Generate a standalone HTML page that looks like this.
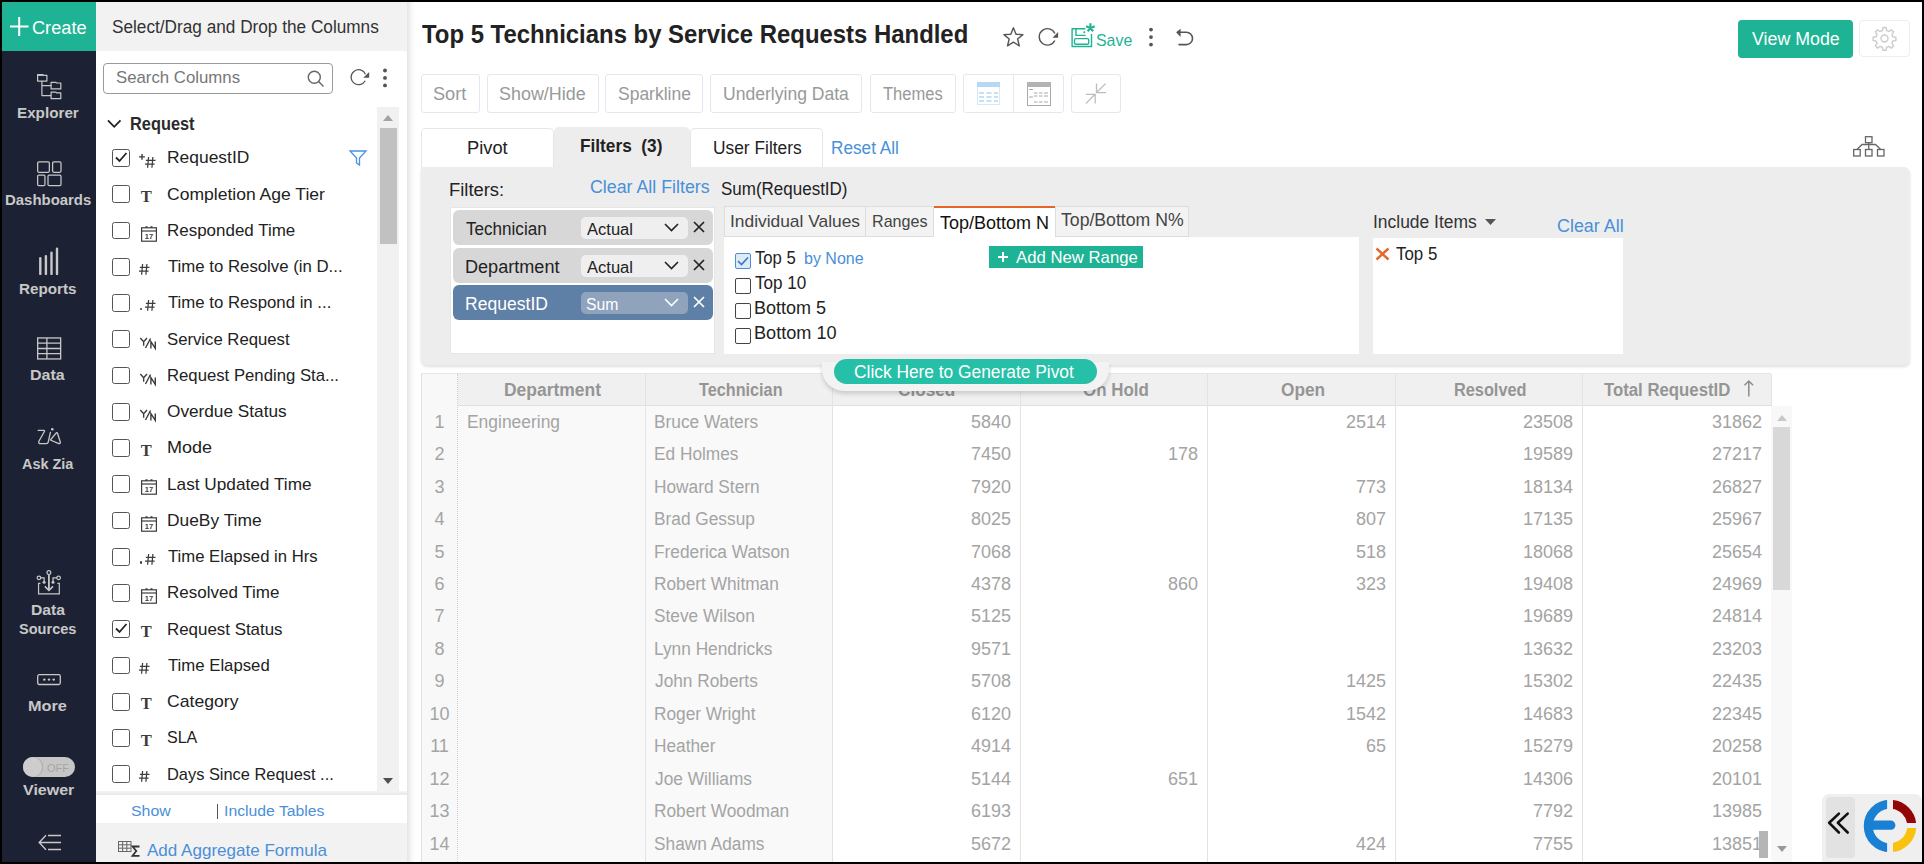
<!DOCTYPE html><html><head><meta charset="utf-8"><style>
*{margin:0;padding:0;box-sizing:border-box}
html,body{width:1924px;height:864px;overflow:hidden;background:#000}
body{position:relative;font-family:"Liberation Sans",sans-serif}
.t{position:absolute;white-space:nowrap;line-height:1}
.b{position:absolute}
svg{position:absolute;overflow:visible}
</style></head><body><div class="b" style="left:2px;top:2px;width:1920.00px;height:860.00px;background:#fff"></div>
<div class="b" style="left:2px;top:2px;width:94.00px;height:860.00px;background:#1c2233"></div>
<div class="b" style="left:2px;top:2px;width:94.00px;height:49.00px;background:#1db394"></div>
<svg style="left:10px;top:17px" width="19" height="19" viewBox="0 0 19 19" ><path d="M9.2 0V19M0 9.6H18.5" stroke="#fff" stroke-width="2"/></svg>
<div class="t" style="left:33.4px;top:18.70px;font-size:18px;color:#fff;font-weight:400;letter-spacing:0px;transform:scaleX(1.0096);transform-origin:0 0;margin-left:-1.01px;">Create</div>
<svg style="left:37px;top:74px" width="24" height="25" viewBox="0 0 24 25" ><g fill="none" stroke="#c8c8c8" stroke-width="1.2" stroke-linejoin="round">
<path d="M0.6 7.1V0.6H5.8L6.6 1.3H9.9V7.1Z"/><path d="M0.6 1.3H6.6"/>
<path d="M4.9 7.1V21.6H14.1M4.9 11.6H14.1"/>
<path d="M14.1 14.9V8.3H18.8L19.6 9H23.8V14.9Z"/><path d="M14.1 24.7V18.1H18.8L19.6 18.8H23.8V24.7Z"/></g></svg>
<div class="t" style="left:18.2px;top:105.25px;font-size:15px;color:#c8c8c8;font-weight:700;letter-spacing:0px;transform:scaleX(1.0150);transform-origin:0 0;margin-left:-1.01px;">Explorer</div>
<svg style="left:37px;top:161px" width="25" height="25" viewBox="0 0 25 25" ><g fill="none" stroke="#c8c8c8" stroke-width="1.25">
<rect x="0.65" y="0.9" width="11.7" height="10.4" rx="1.2"/><rect x="15.6" y="0.9" width="8.4" height="10.4" rx="1.2"/>
<rect x="0.65" y="14.2" width="7.3" height="10.4" rx="1.2"/><rect x="11" y="14.2" width="13" height="10.4" rx="1.2"/></g></svg>
<div class="t" style="left:6.2px;top:192.25px;font-size:15px;color:#c8c8c8;font-weight:700;letter-spacing:0px;transform:scaleX(0.9953);transform-origin:0 0;margin-left:-1.00px;">Dashboards</div>
<svg style="left:39px;top:248px" width="20" height="27" viewBox="0 0 20 27" ><path d="M1.3 10.1V25.9M6.9 8.3V25.9M12.5 4.6V25.9M18 0.8V25.9" fill="none" stroke="#c8c8c8" stroke-width="2.4" stroke-linecap="round"/></svg>
<div class="t" style="left:20.3px;top:280.85px;font-size:15px;color:#c8c8c8;font-weight:700;letter-spacing:0px;transform:scaleX(1.0145);transform-origin:0 0;margin-left:-1.01px;">Reports</div>
<svg style="left:37px;top:337px" width="24" height="23" viewBox="0 0 24 23" ><g fill="none" stroke="#c8c8c8" stroke-width="1.3"><rect x="0.65" y="0.95" width="23" height="21"/><path d="M0.65 6.2H23.6M0.65 11.5H23.6M0.65 16.7H23.6M9.9 0.95V21.9"/></g></svg>
<div class="t" style="left:31.3px;top:367.05px;font-size:15px;color:#c8c8c8;font-weight:700;letter-spacing:0px;transform:scaleX(1.0656);transform-origin:0 0;margin-left:-1.07px;">Data</div>
<svg style="left:37px;top:428px" width="24" height="17" viewBox="0 0 24 17" ><g fill="none" stroke="#c8c8c8" stroke-width="1.3" stroke-linejoin="round" stroke-linecap="round">
<path d="M1.2 2.4H6.8Q8 2.4 7.4 3.5L1.9 13.2Q1.2 15.7 3.5 15.7H9.5Q10.6 15.7 11.1 14.6L13.4 4.3"/>
<path d="M13.4 12L19.3 4.8Q20 4.2 20.4 5L23.3 14Q23.6 15.8 21.8 15.6Z"/></g>
<circle cx="15.3" cy="1.3" r="1.3" fill="#c8c8c8"/></svg>
<div class="t" style="left:22.1px;top:455.85px;font-size:15px;color:#c8c8c8;font-weight:700;letter-spacing:0px;transform:scaleX(0.9630);transform-origin:0 0;margin-left:0.00px;">Ask Zia</div>
<svg style="left:37px;top:570px" width="24" height="25" viewBox="0 0 24 25" ><g fill="none" stroke="#c8c8c8" stroke-width="1.2">
<path d="M3.4 13.4H1.56V23.8H22.3V13.4H20.4"/><path d="M11.9 4.7V19.7" stroke-width="1.8"/><path d="M7.85 16.4L11.9 20.4L16 16.4" stroke-width="1.5"/>
<path d="M3.8 7.85H7.1V11.5M20 7.85H16V11.5"/>
<circle cx="11.9" cy="2.6" r="1.9"/><circle cx="1.93" cy="7.85" r="1.8"/><circle cx="21.6" cy="7.85" r="1.8"/></g>
<circle cx="7.1" cy="12.3" r="1.5" fill="#c8c8c8"/><circle cx="16" cy="12.3" r="1.5" fill="#c8c8c8"/></svg>
<div class="t" style="left:31.799999999999997px;top:601.75px;font-size:15px;color:#c8c8c8;font-weight:700;letter-spacing:0px;transform:scaleX(1.0469);transform-origin:0 0;margin-left:-1.05px;">Data</div>
<div class="t" style="left:19.9px;top:621.05px;font-size:15px;color:#c8c8c8;font-weight:700;letter-spacing:0px;transform:scaleX(0.9707);transform-origin:0 0;margin-left:-0.97px;">Sources</div>
<svg style="left:37px;top:674px" width="24" height="11" viewBox="0 0 24 11" ><rect x="0.7" y="0.7" width="22.6" height="9.8" rx="1.5" fill="none" stroke="#c8c8c8" stroke-width="1.3"/>
<circle cx="7.3" cy="5.6" r="1.2" fill="#c8c8c8"/><circle cx="12" cy="5.6" r="1.2" fill="#c8c8c8"/><circle cx="16.7" cy="5.6" r="1.2" fill="#c8c8c8"/></svg>
<div class="t" style="left:29.4px;top:698.45px;font-size:15px;color:#c8c8c8;font-weight:700;letter-spacing:0px;transform:scaleX(1.0857);transform-origin:0 0;margin-left:-1.09px;">More</div>
<div class="b" style="left:23px;top:757px;width:52.00px;height:20.00px;background:#c6c6c6;border-radius:10px"></div>
<div class="b" style="left:23px;top:757px;width:19.00px;height:20.00px;background:#cdcdcd;border-radius:50%;box-shadow:1px 0 1px rgba(0,0,0,0.15)"></div>
<div class="t" style="left:47px;top:762.78px;font-size:10.5px;color:#a6a6a6;font-weight:400;letter-spacing:0px;transform:scaleX(1.0476);transform-origin:0 0;margin-left:0.00px;">OFF</div>
<div class="t" style="left:22.8px;top:781.85px;font-size:15px;color:#c8c8c8;font-weight:700;letter-spacing:0px;transform:scaleX(1.0667);transform-origin:0 0;margin-left:0.00px;">Viewer</div>
<svg style="left:38px;top:834px" width="24" height="17" viewBox="0 0 24 17" ><path d="M8 1.2L1.2 8.5L8 15.8M1.2 8.5H23M10 1.5H23M10 15.5H23" fill="none" stroke="#c8c8c8" stroke-width="1.4"/></svg>
<div class="b" style="left:96px;top:2px;width:311.00px;height:860.00px;background:#fff"></div>
<div class="b" style="left:96px;top:2px;width:311.00px;height:49.00px;background:#f2f2f2"></div>
<div class="t" style="left:113px;top:18.62px;font-size:17.5px;color:#333;font-weight:400;letter-spacing:0px;transform:scaleX(0.9830);transform-origin:0 0;margin-left:-0.98px;">Select/Drag and Drop the Columns</div>
<div class="b" style="left:407px;top:2px;width:9.00px;height:860.00px;background:linear-gradient(90deg,#e4e4e4,#f7f7f7 50%,#fff)"></div>
<div class="b" style="left:103px;top:63px;width:230.00px;height:31.00px;border:1px solid #9a9a9a;border-radius:4px;background:#fff"></div>
<div class="t" style="left:116.9px;top:68.75px;font-size:17px;color:#777;font-weight:400;letter-spacing:0px;transform:scaleX(0.9871);transform-origin:0 0;margin-left:-0.99px;">Search Columns</div>
<svg style="left:307px;top:70px" width="18" height="18" viewBox="0 0 18 18" ><g fill="none" stroke="#666" stroke-width="1.4"><circle cx="7.3" cy="7.3" r="6"/><path d="M11.6 11.6L16.5 16.5"/></g></svg>
<svg style="left:340px;top:60px" width="30" height="30" viewBox="0 0 30 30" ><path d="M25.5 14.27A7.5 7.5 0 1 0 25.22 20.72" fill="none" stroke="#555" stroke-width="1.25"/><path d="M29.2 12V17.8H23.3Z" fill="#555"/></svg>
<svg style="left:380px;top:65px" width="10" height="25" viewBox="0 0 10 25" ><circle cx="5" cy="5.45" r="1.95" fill="#555"/><circle cx="5" cy="12.9" r="1.95" fill="#555"/><circle cx="5" cy="20.4" r="1.95" fill="#555"/></svg>
<svg style="left:107px;top:119px" width="15" height="10" viewBox="0 0 15 10" ><path d="M1 1.3L7.2 7.8L13.5 1.3" fill="none" stroke="#222" stroke-width="1.8"/></svg>
<div class="t" style="left:130.8px;top:114.60px;font-size:18px;color:#2a2a2a;font-weight:700;letter-spacing:0px;transform:scaleX(0.9086);transform-origin:0 0;margin-left:-0.91px;">Request</div>
<div class="b" style="left:377px;top:107px;width:22.00px;height:684.00px;background:#f1f1f1"></div>
<svg style="left:383px;top:115px" width="10" height="6" viewBox="0 0 10 6" ><path d="M0 6L5 0L10 6Z" fill="#a3a3a3"/></svg>
<div class="b" style="left:380px;top:128px;width:17.00px;height:116.00px;background:#c1c1c1"></div>
<svg style="left:383px;top:778px" width="10" height="6" viewBox="0 0 10 6" ><path d="M0 0L5 6L10 0Z" fill="#505050"/></svg>
<div class="b" style="left:112.2px;top:149.15px;width:17.70px;height:17.70px;border:1.2px solid #555;border-radius:2.5px;background:#fff"></div>
<svg style="left:114px;top:149.5px" width="14" height="14" viewBox="0 0 14 14" ><path d="M2 7.5L5.5 11L12.5 3" fill="none" stroke="#222" stroke-width="1.8"/></svg>
<svg style="left:138.9px;top:154.20000000000002px" width="6" height="6" viewBox="0 0 6 6" ><path d="M3 0V5.7M0 2.85H5.9" stroke="#3d3d3d" stroke-width="1.4"/></svg>
<svg style="left:144.9px;top:157.20000000000002px" width="11" height="11" viewBox="0 0 11 11" ><path d="M3.6 0L2.6 10.7M7.9 0L6.9 10.7M0.9 3.3H10.5M0 7.2H9.6" fill="none" stroke="#3d3d3d" stroke-width="1.25"/></svg>
<div class="t" style="left:168.25px;top:149.45px;font-size:17px;color:#222;font-weight:400;letter-spacing:0px;transform:scaleX(1.0247);transform-origin:0 0;margin-left:-1.02px;">RequestID</div>
<div class="b" style="left:112.2px;top:185.4px;width:17.70px;height:17.70px;border:1.2px solid #555;border-radius:2.5px;background:#fff"></div>
<div class="t" style="left:140.8px;top:188.77px;font-size:16.5px;color:#3d3d3d;font-weight:700;letter-spacing:0px;font-family:'Liberation Serif';margin-left:0.00px;">T</div>
<div class="t" style="left:168.25px;top:185.70px;font-size:17px;color:#222;font-weight:400;letter-spacing:0px;transform:scaleX(1.0312);transform-origin:0 0;margin-left:-1.03px;">Completion Age Tier</div>
<div class="b" style="left:112.2px;top:221.65px;width:17.70px;height:17.70px;border:1.2px solid #555;border-radius:2.5px;background:#fff"></div>
<svg style="left:141px;top:225.70000000000002px" width="16" height="16" viewBox="0 0 16 16" ><g fill="none" stroke="#3d3d3d" stroke-width="1.2"><rect x="0.6" y="1.8" width="14.8" height="13.4"/><path d="M0.6 5H15.4"/></g>
<path d="M4.5 0.2H6.5V2H4.5ZM9.5 0.2H11.5V2H9.5Z" fill="#3d3d3d"/>
<text x="8" y="13.3" font-size="7.5" text-anchor="middle" fill="#3d3d3d" font-family="Liberation Sans" font-weight="700">17</text></svg>
<div class="t" style="left:168.25px;top:221.95px;font-size:17px;color:#222;font-weight:400;letter-spacing:0px;transform:scaleX(0.9980);transform-origin:0 0;margin-left:-1.00px;">Responded Time</div>
<div class="b" style="left:112.2px;top:257.9px;width:17.70px;height:17.70px;border:1.2px solid #555;border-radius:2.5px;background:#fff"></div>
<svg style="left:139.3px;top:263.95px" width="11" height="11" viewBox="0 0 11 11" ><path d="M3.6 0L2.6 10.7M7.9 0L6.9 10.7M0.9 3.3H10.5M0 7.2H9.6" fill="none" stroke="#3d3d3d" stroke-width="1.25"/></svg>
<div class="t" style="left:168.25px;top:258.20px;font-size:17px;color:#222;font-weight:400;letter-spacing:0px;transform:scaleX(0.9866);transform-origin:0 0;margin-left:0.00px;">Time to Resolve (in D...</div>
<div class="b" style="left:112.2px;top:294.15px;width:17.70px;height:17.70px;border:1.2px solid #555;border-radius:2.5px;background:#fff"></div>
<div class="b" style="left:139.6px;top:307.7px;width:2.40px;height:2.40px;background:#3d3d3d;border-radius:50%"></div>
<svg style="left:144.8px;top:300.0px" width="11" height="11" viewBox="0 0 11 11" ><path d="M3.6 0L2.6 10.7M7.9 0L6.9 10.7M0.9 3.3H10.5M0 7.2H9.6" fill="none" stroke="#3d3d3d" stroke-width="1.25"/></svg>
<div class="t" style="left:168.25px;top:294.45px;font-size:17px;color:#222;font-weight:400;letter-spacing:0px;transform:scaleX(0.9857);transform-origin:0 0;margin-left:0.00px;">Time to Respond in ...</div>
<div class="b" style="left:112.2px;top:330.4px;width:17.70px;height:17.70px;border:1.2px solid #555;border-radius:2.5px;background:#fff"></div>
<svg style="left:139.9px;top:337.84999999999997px" width="16" height="11" viewBox="0 0 16 11" ><g fill="none" stroke="#3d3d3d" stroke-width="1.4"><path d="M0.3 0L3.65 3.8L7 0M3.65 3.8V7.7M10.5 0.5L5.5 10"/><path d="M10.9 10.4V3.6L15.3 10.4V3.6"/></g></svg>
<div class="t" style="left:168.25px;top:330.70px;font-size:17px;color:#222;font-weight:400;letter-spacing:0px;transform:scaleX(0.9827);transform-origin:0 0;margin-left:-0.98px;">Service Request</div>
<div class="b" style="left:112.2px;top:366.65px;width:17.70px;height:17.70px;border:1.2px solid #555;border-radius:2.5px;background:#fff"></div>
<svg style="left:139.9px;top:374.09999999999997px" width="16" height="11" viewBox="0 0 16 11" ><g fill="none" stroke="#3d3d3d" stroke-width="1.4"><path d="M0.3 0L3.65 3.8L7 0M3.65 3.8V7.7M10.5 0.5L5.5 10"/><path d="M10.9 10.4V3.6L15.3 10.4V3.6"/></g></svg>
<div class="t" style="left:168.25px;top:366.95px;font-size:17px;color:#222;font-weight:400;letter-spacing:0px;transform:scaleX(0.9834);transform-origin:0 0;margin-left:-0.98px;">Request Pending Sta...</div>
<div class="b" style="left:112.2px;top:402.9px;width:17.70px;height:17.70px;border:1.2px solid #555;border-radius:2.5px;background:#fff"></div>
<svg style="left:139.9px;top:410.34999999999997px" width="16" height="11" viewBox="0 0 16 11" ><g fill="none" stroke="#3d3d3d" stroke-width="1.4"><path d="M0.3 0L3.65 3.8L7 0M3.65 3.8V7.7M10.5 0.5L5.5 10"/><path d="M10.9 10.4V3.6L15.3 10.4V3.6"/></g></svg>
<div class="t" style="left:168.25px;top:403.20px;font-size:17px;color:#222;font-weight:400;letter-spacing:0px;transform:scaleX(1.0124);transform-origin:0 0;margin-left:-1.01px;">Overdue Status</div>
<div class="b" style="left:112.2px;top:439.15px;width:17.70px;height:17.70px;border:1.2px solid #555;border-radius:2.5px;background:#fff"></div>
<div class="t" style="left:140.8px;top:442.51px;font-size:16.5px;color:#3d3d3d;font-weight:700;letter-spacing:0px;font-family:'Liberation Serif';margin-left:0.00px;">T</div>
<div class="t" style="left:168.25px;top:439.45px;font-size:17px;color:#222;font-weight:400;letter-spacing:0px;transform:scaleX(1.0598);transform-origin:0 0;margin-left:-1.06px;">Mode</div>
<div class="b" style="left:112.2px;top:475.4px;width:17.70px;height:17.70px;border:1.2px solid #555;border-radius:2.5px;background:#fff"></div>
<svg style="left:141px;top:479.45px" width="16" height="16" viewBox="0 0 16 16" ><g fill="none" stroke="#3d3d3d" stroke-width="1.2"><rect x="0.6" y="1.8" width="14.8" height="13.4"/><path d="M0.6 5H15.4"/></g>
<path d="M4.5 0.2H6.5V2H4.5ZM9.5 0.2H11.5V2H9.5Z" fill="#3d3d3d"/>
<text x="8" y="13.3" font-size="7.5" text-anchor="middle" fill="#3d3d3d" font-family="Liberation Sans" font-weight="700">17</text></svg>
<div class="t" style="left:168.25px;top:475.70px;font-size:17px;color:#222;font-weight:400;letter-spacing:0px;transform:scaleX(1.0131);transform-origin:0 0;margin-left:-1.01px;">Last Updated Time</div>
<div class="b" style="left:112.2px;top:511.65px;width:17.70px;height:17.70px;border:1.2px solid #555;border-radius:2.5px;background:#fff"></div>
<svg style="left:141px;top:515.6999999999999px" width="16" height="16" viewBox="0 0 16 16" ><g fill="none" stroke="#3d3d3d" stroke-width="1.2"><rect x="0.6" y="1.8" width="14.8" height="13.4"/><path d="M0.6 5H15.4"/></g>
<path d="M4.5 0.2H6.5V2H4.5ZM9.5 0.2H11.5V2H9.5Z" fill="#3d3d3d"/>
<text x="8" y="13.3" font-size="7.5" text-anchor="middle" fill="#3d3d3d" font-family="Liberation Sans" font-weight="700">17</text></svg>
<div class="t" style="left:168.25px;top:511.95px;font-size:17px;color:#222;font-weight:400;letter-spacing:0px;transform:scaleX(1.0214);transform-origin:0 0;margin-left:-1.02px;">DueBy Time</div>
<div class="b" style="left:112.2px;top:547.9px;width:17.70px;height:17.70px;border:1.2px solid #555;border-radius:2.5px;background:#fff"></div>
<div class="b" style="left:139.6px;top:561.4499999999999px;width:2.40px;height:2.40px;background:#3d3d3d;border-radius:50%"></div>
<svg style="left:144.8px;top:553.75px" width="11" height="11" viewBox="0 0 11 11" ><path d="M3.6 0L2.6 10.7M7.9 0L6.9 10.7M0.9 3.3H10.5M0 7.2H9.6" fill="none" stroke="#3d3d3d" stroke-width="1.25"/></svg>
<div class="t" style="left:168.25px;top:548.20px;font-size:17px;color:#222;font-weight:400;letter-spacing:0px;transform:scaleX(0.9819);transform-origin:0 0;margin-left:0.00px;">Time Elapsed in Hrs</div>
<div class="b" style="left:112.2px;top:584.15px;width:17.70px;height:17.70px;border:1.2px solid #555;border-radius:2.5px;background:#fff"></div>
<svg style="left:141px;top:588.1999999999999px" width="16" height="16" viewBox="0 0 16 16" ><g fill="none" stroke="#3d3d3d" stroke-width="1.2"><rect x="0.6" y="1.8" width="14.8" height="13.4"/><path d="M0.6 5H15.4"/></g>
<path d="M4.5 0.2H6.5V2H4.5ZM9.5 0.2H11.5V2H9.5Z" fill="#3d3d3d"/>
<text x="8" y="13.3" font-size="7.5" text-anchor="middle" fill="#3d3d3d" font-family="Liberation Sans" font-weight="700">17</text></svg>
<div class="t" style="left:168.25px;top:584.45px;font-size:17px;color:#222;font-weight:400;letter-spacing:0px;transform:scaleX(0.9995);transform-origin:0 0;margin-left:-1.00px;">Resolved Time</div>
<div class="b" style="left:112.2px;top:620.4px;width:17.70px;height:17.70px;border:1.2px solid #555;border-radius:2.5px;background:#fff"></div>
<svg style="left:114px;top:620.75px" width="14" height="14" viewBox="0 0 14 14" ><path d="M2 7.5L5.5 11L12.5 3" fill="none" stroke="#222" stroke-width="1.8"/></svg>
<div class="t" style="left:140.8px;top:623.76px;font-size:16.5px;color:#3d3d3d;font-weight:700;letter-spacing:0px;font-family:'Liberation Serif';margin-left:0.00px;">T</div>
<div class="t" style="left:168.25px;top:620.70px;font-size:17px;color:#222;font-weight:400;letter-spacing:0px;transform:scaleX(0.9943);transform-origin:0 0;margin-left:-0.99px;">Request Status</div>
<div class="b" style="left:112.2px;top:656.65px;width:17.70px;height:17.70px;border:1.2px solid #555;border-radius:2.5px;background:#fff"></div>
<svg style="left:139.3px;top:662.6999999999999px" width="11" height="11" viewBox="0 0 11 11" ><path d="M3.6 0L2.6 10.7M7.9 0L6.9 10.7M0.9 3.3H10.5M0 7.2H9.6" fill="none" stroke="#3d3d3d" stroke-width="1.25"/></svg>
<div class="t" style="left:168.25px;top:656.95px;font-size:17px;color:#222;font-weight:400;letter-spacing:0px;transform:scaleX(0.9848);transform-origin:0 0;margin-left:0.00px;">Time Elapsed</div>
<div class="b" style="left:112.2px;top:692.9px;width:17.70px;height:17.70px;border:1.2px solid #555;border-radius:2.5px;background:#fff"></div>
<div class="t" style="left:140.8px;top:696.26px;font-size:16.5px;color:#3d3d3d;font-weight:700;letter-spacing:0px;font-family:'Liberation Serif';margin-left:0.00px;">T</div>
<div class="t" style="left:168.25px;top:693.20px;font-size:17px;color:#222;font-weight:400;letter-spacing:0px;transform:scaleX(1.0360);transform-origin:0 0;margin-left:-1.04px;">Category</div>
<div class="b" style="left:112.2px;top:729.15px;width:17.70px;height:17.70px;border:1.2px solid #555;border-radius:2.5px;background:#fff"></div>
<div class="t" style="left:140.8px;top:732.51px;font-size:16.5px;color:#3d3d3d;font-weight:700;letter-spacing:0px;font-family:'Liberation Serif';margin-left:0.00px;">T</div>
<div class="t" style="left:168.25px;top:729.45px;font-size:17px;color:#222;font-weight:400;letter-spacing:0px;transform:scaleX(0.9435);transform-origin:0 0;margin-left:-0.94px;">SLA</div>
<div class="b" style="left:112.2px;top:765.4px;width:17.70px;height:17.70px;border:1.2px solid #555;border-radius:2.5px;background:#fff"></div>
<svg style="left:139.3px;top:771.4499999999999px" width="11" height="11" viewBox="0 0 11 11" ><path d="M3.6 0L2.6 10.7M7.9 0L6.9 10.7M0.9 3.3H10.5M0 7.2H9.6" fill="none" stroke="#3d3d3d" stroke-width="1.25"/></svg>
<div class="t" style="left:168.25px;top:765.70px;font-size:17px;color:#222;font-weight:400;letter-spacing:0px;transform:scaleX(0.9646);transform-origin:0 0;margin-left:-0.96px;">Days Since Request ...</div>
<svg style="left:349px;top:150px" width="18" height="16" viewBox="0 0 18 16" ><path d="M1 1H17L10.5 8V15L7.5 13V8Z" fill="none" stroke="#4a90e2" stroke-width="1.3"/></svg>
<div class="b" style="left:96px;top:791px;width:311.00px;height:4.00px;background:linear-gradient(#f4f4f4,#e9e9e9)"></div>
<div class="t" style="left:132px;top:803.33px;font-size:15.5px;color:#4a8fd8;font-weight:400;letter-spacing:0px;transform:scaleX(1.0263);transform-origin:0 0;margin-left:-1.03px;">Show</div>
<div class="b" style="left:216.5px;top:804px;width:1.50px;height:15.00px;background:#555"></div>
<div class="t" style="left:225.4px;top:803.33px;font-size:15.5px;color:#4a8fd8;font-weight:400;letter-spacing:0px;transform:scaleX(1.0165);transform-origin:0 0;margin-left:-1.02px;">Include Tables</div>
<div class="b" style="left:96px;top:823px;width:311.00px;height:39.00px;background:#f2f2f2"></div>
<svg style="left:118px;top:841px" width="24" height="17" viewBox="0 0 24 17" ><g fill="none" stroke="#666" stroke-width="1"><rect x="0.5" y="0.5" width="12.5" height="10"/><path d="M0.5 3.8H13M0.5 7.2H13M4.6 0.5V10.5M8.8 0.5V10.5"/></g>
<path d="M21.5 5.5H14.5L18.3 10L14.5 14.8H21.5" fill="none" stroke="#333" stroke-width="1.8"/></svg>
<div class="t" style="left:147.4px;top:841.55px;font-size:17px;color:#4a8fd8;font-weight:400;letter-spacing:0px;transform:scaleX(1.0022);transform-origin:0 0;margin-left:0.00px;">Add Aggregate Formula</div>
<div class="t" style="left:422.3px;top:22.04px;font-size:25.6px;color:#222;font-weight:700;letter-spacing:0px;transform:scaleX(0.9337);transform-origin:0 0;margin-left:0.00px;">Top 5 Technicians by Service Requests Handled</div>
<svg style="left:1003px;top:27px" width="21" height="20" viewBox="0 0 21 20" ><path d="M10.4 0.8L13 7.2L19.9 7.6L14.6 12L16.3 18.8L10.4 15.1L4.5 18.8L6.2 12L0.9 7.6L7.8 7.2Z" fill="none" stroke="#555" stroke-width="1.4" stroke-linejoin="round"/></svg>
<svg style="left:1034px;top:24px" width="30" height="26" viewBox="0 0 30 26" ><path d="M20.6 33.6" /><path d="M20.9 9.5A8.2 8.2 0 1 0 20.8 16.5" fill="none" stroke="#555" stroke-width="1.4"/><path d="M24.1 8.1V13.7H18.5Z" fill="#555"/></svg>
<svg style="left:1068px;top:18px" width="30" height="32" viewBox="0 0 30 32" ><g fill="none" stroke="#1db394" stroke-width="1.4" stroke-linejoin="round">
<path d="M17.4 10.7H4.1V28.5H23.5V15.9"/><path d="M8 10.7V17.4H17.6"/><rect x="6.5" y="20.6" width="14.2" height="5.7" rx="1.3"/></g>
<circle cx="16.3" cy="14.3" r="1" fill="#1db394"/>
<path d="M22.4 5.2V10.4M18.1 8.3L22.4 10.2L26.7 8.3M19.6 13.3L22.4 10.2L25.2 13.3" fill="none" stroke="#1db394" stroke-width="2.1"/></svg>
<div class="t" style="left:1097.2px;top:32.45px;font-size:17px;color:#1db394;font-weight:400;letter-spacing:0px;transform:scaleX(0.9351);transform-origin:0 0;margin-left:-0.94px;">Save</div>
<svg style="left:1146px;top:25px" width="10" height="25" viewBox="0 0 10 25" ><circle cx="5" cy="4.6" r="1.9" fill="#555"/><circle cx="5" cy="12.1" r="1.9" fill="#555"/><circle cx="5" cy="19.6" r="1.9" fill="#555"/></svg>
<svg style="left:1170px;top:22px" width="30" height="30" viewBox="0 0 30 30" ><path d="M10.4 10.2H16.3A6.2 6.2 0 0 1 16.3 22.6H9" fill="none" stroke="#555" stroke-width="1.6" stroke-linecap="round"/><path d="M6.1 10.2L10.6 6.8V14.9Z" fill="#555"/></svg>
<div class="b" style="left:1738px;top:20px;width:115.00px;height:38.00px;background:#1db394;border-radius:4px"></div>
<div class="t" style="left:1752px;top:29.90px;font-size:18px;color:#fff;font-weight:400;letter-spacing:0px;transform:scaleX(0.9886);transform-origin:0 0;margin-left:0.00px;">View Mode</div>
<div class="b" style="left:1859px;top:20px;width:51.00px;height:37.00px;border:1px solid #eee;border-radius:4px;background:#fff"></div>
<svg style="left:1872px;top:26px" width="25" height="25" viewBox="0 0 25 25" ><g fill="none" stroke="#ccc" stroke-width="1.4"><circle cx="12.5" cy="12.5" r="3.5"/><path d="M11 1.5h3l.6 3 2.3 1 2.6-1.7 2.1 2.1-1.7 2.6 1 2.3 3 .6v3l-3 .6-1 2.3 1.7 2.6-2.1 2.1-2.6-1.7-2.3 1-.6 3h-3l-.6-3-2.3-1-2.6 1.7-2.1-2.1 1.7-2.6-1-2.3-3-.6v-3l3-.6 1-2.3-1.7-2.6 2.1-2.1 2.6 1.7 2.3-1z"/></g></svg>
<div class="b" style="left:421px;top:74px;width:59.00px;height:39.00px;border:1px solid #e3e8f0;border-radius:3px;background:#fff"></div>
<div class="t" style="left:434.4px;top:86.33px;font-size:17.5px;color:#999;font-weight:400;letter-spacing:0px;transform:scaleX(1.0387);transform-origin:0 0;margin-left:-1.04px;">Sort</div>
<div class="b" style="left:487px;top:74px;width:112.00px;height:39.00px;border:1px solid #e3e8f0;border-radius:3px;background:#fff"></div>
<div class="t" style="left:500.3px;top:86.33px;font-size:17.5px;color:#999;font-weight:400;letter-spacing:0px;transform:scaleX(1.0241);transform-origin:0 0;margin-left:-1.02px;">Show/Hide</div>
<div class="b" style="left:605px;top:74px;width:98.00px;height:39.00px;border:1px solid #e3e8f0;border-radius:3px;background:#fff"></div>
<div class="t" style="left:619.3px;top:86.33px;font-size:17.5px;color:#999;font-weight:400;letter-spacing:0px;transform:scaleX(0.9986);transform-origin:0 0;margin-left:-1.00px;">Sparkline</div>
<div class="b" style="left:710px;top:74px;width:152.00px;height:39.00px;border:1px solid #e3e8f0;border-radius:3px;background:#fff"></div>
<div class="t" style="left:724px;top:86.33px;font-size:17.5px;color:#999;font-weight:400;letter-spacing:0px;transform:scaleX(1.0032);transform-origin:0 0;margin-left:-1.00px;">Underlying Data</div>
<div class="b" style="left:870px;top:74px;width:86.00px;height:39.00px;border:1px solid #e3e8f0;border-radius:3px;background:#fff"></div>
<div class="t" style="left:883.4px;top:86.33px;font-size:17.5px;color:#999;font-weight:400;letter-spacing:0px;transform:scaleX(0.9444);transform-origin:0 0;margin-left:0.00px;">Themes</div>
<div class="b" style="left:963px;top:74px;width:101.00px;height:39.00px;border:1px solid #e3e8f0;border-radius:3px;background:#fff"></div>
<div class="b" style="left:1013px;top:74px;width:1.00px;height:39.00px;background:#e3e8f0"></div>
<div class="b" style="left:1071px;top:74px;width:50.00px;height:39.00px;border:1px solid #e3e8f0;border-radius:3px;background:#fff"></div>
<svg style="left:977px;top:82px" width="24" height="24" viewBox="0 0 24 24" ><rect x="0.5" y="0.5" width="22" height="22" fill="none" stroke="#a9d2f3" stroke-dasharray="1 1"/><rect x="0" y="0" width="23" height="5" fill="#b6d8f2"/>
<path d="M2 11H7M9.5 11H14.5M17 11H21M2 15H7M9.5 15H14.5M17 15H21M2 19H7M9.5 19H14.5M17 19H21" stroke="#8cc4ee" stroke-width="1.2"/></svg>
<svg style="left:1027px;top:82px" width="24" height="24" viewBox="0 0 24 24" ><rect x="0.5" y="0.5" width="23" height="23" fill="none" stroke="#aaa"/><rect x="0" y="0" width="24" height="5" fill="#b3b3b3"/>
<path d="M2 7.5H6M2 15H6M7 11H10.5M12 11H15.5M17 11H21M7 14H10.5M12 14H15.5M17 14H21M7 20H10.5M12 20H15.5M17 20H21" stroke="#aaa" stroke-width="1.2"/></svg>
<svg style="left:1085px;top:83px" width="22" height="22" viewBox="0 0 22 22" ><path d="M20.6 0.6L11.8 9.3M11.5 0.6V9.6H20.9M0.9 20.6L9.8 11.5M0.9 11.3H10.2V20.6" fill="none" stroke="#bdbdbd" stroke-width="1.3"/></svg>
<div class="b" style="left:421px;top:128px;width:133.00px;height:40.00px;border:1px solid #e6e6e6;border-bottom:none;border-radius:5px 5px 0 0;background:#fff"></div>
<div class="b" style="left:554px;top:127px;width:136.00px;height:41.00px;background:#ededed;border-radius:5px 5px 0 0"></div>
<div class="b" style="left:690px;top:128px;width:133.00px;height:40.00px;border:1px solid #e6e6e6;border-bottom:none;border-radius:5px 5px 0 0;background:#fff"></div>
<div class="t" style="left:468.1px;top:140.12px;font-size:17.5px;color:#222;font-weight:400;letter-spacing:0px;transform:scaleX(1.0447);transform-origin:0 0;margin-left:-1.04px;">Pivot</div>
<div class="t" style="left:581px;top:137.62px;font-size:17.5px;color:#222;font-weight:700;letter-spacing:0px;transform:scaleX(0.9854);transform-origin:0 0;margin-left:-0.99px;">Filters&nbsp;&nbsp;(3)</div>
<div class="t" style="left:713.7px;top:140.12px;font-size:17.5px;color:#222;font-weight:400;letter-spacing:0px;transform:scaleX(0.9920);transform-origin:0 0;margin-left:-0.99px;">User Filters</div>
<div class="t" style="left:831.6px;top:140.12px;font-size:17.5px;color:#4a8fd8;font-weight:400;letter-spacing:0px;transform:scaleX(0.9836);transform-origin:0 0;margin-left:-0.98px;">Reset All</div>
<svg style="left:1853px;top:136px" width="32" height="21" viewBox="0 0 32 21" ><g fill="none" stroke="#666" stroke-width="1.3">
<rect x="12.5" y="0.7" width="6.5" height="6"/><rect x="0.7" y="13.5" width="6.5" height="6.5"/><rect x="12.5" y="13.5" width="6.5" height="6.5"/><rect x="24.5" y="13.5" width="6.5" height="6.5"/>
<path d="M15.75 6.7V13.5M4 13.5L9 8.5H22.5L27.7 13.5"/></g></svg>
<div class="b" style="left:421px;top:167px;width:1489.00px;height:198.00px;background:#ededed;border-radius:0 6px 6px 6px;box-shadow:0 2px 3px rgba(0,0,0,0.12)"></div>
<div class="t" style="left:450px;top:181.62px;font-size:17.5px;color:#222;font-weight:400;letter-spacing:0px;transform:scaleX(1.0500);transform-origin:0 0;margin-left:-1.05px;">Filters:</div>
<div class="t" style="left:591.25px;top:179.12px;font-size:17.5px;color:#4a8fd8;font-weight:400;letter-spacing:0px;transform:scaleX(1.0172);transform-origin:0 0;margin-left:-1.02px;">Clear All Filters</div>
<div class="t" style="left:722px;top:181.12px;font-size:17.5px;color:#222;font-weight:400;letter-spacing:0px;transform:scaleX(0.9707);transform-origin:0 0;margin-left:-0.97px;">Sum(RequestID)</div>
<div class="b" style="left:450px;top:207px;width:265.00px;height:147.00px;background:#fff;border:1px solid #e6e6e6"></div>
<div class="b" style="left:453px;top:210px;width:260.00px;height:35.00px;background:#d7d7d7;border-radius:6px"></div>
<div class="t" style="left:465.75px;top:220.62px;font-size:17.5px;color:#222;font-weight:400;letter-spacing:0px;transform:scaleX(0.9756);transform-origin:0 0;margin-left:0.00px;">Technician</div>
<div class="b" style="left:581px;top:217px;width:107.00px;height:22.00px;background:#efefef;border-radius:5px"></div>
<div class="t" style="left:587px;top:221.90px;font-size:16px;color:#222;font-weight:400;letter-spacing:0px;transform:scaleX(1.0341);transform-origin:0 0;margin-left:0.00px;">Actual</div>
<svg style="left:664px;top:223px" width="15" height="9" viewBox="0 0 15 9" ><path d="M1 1L7.5 7.5L14 1" fill="none" stroke="#222" stroke-width="1.6"/></svg>
<svg style="left:693px;top:221px" width="12" height="12" viewBox="0 0 12 12" ><path d="M1 1L11 11M11 1L1 11" fill="none" stroke="#222" stroke-width="1.7"/></svg>
<div class="b" style="left:453px;top:248px;width:260.00px;height:35.00px;background:#d7d7d7;border-radius:6px"></div>
<div class="t" style="left:465.75px;top:258.62px;font-size:17.5px;color:#222;font-weight:400;letter-spacing:0px;transform:scaleX(1.0333);transform-origin:0 0;margin-left:-1.03px;">Department</div>
<div class="b" style="left:581px;top:255px;width:107.00px;height:22.00px;background:#efefef;border-radius:5px"></div>
<div class="t" style="left:587px;top:259.90px;font-size:16px;color:#222;font-weight:400;letter-spacing:0px;transform:scaleX(1.0341);transform-origin:0 0;margin-left:0.00px;">Actual</div>
<svg style="left:664px;top:261px" width="15" height="9" viewBox="0 0 15 9" ><path d="M1 1L7.5 7.5L14 1" fill="none" stroke="#222" stroke-width="1.6"/></svg>
<svg style="left:693px;top:259px" width="12" height="12" viewBox="0 0 12 12" ><path d="M1 1L11 11M11 1L1 11" fill="none" stroke="#222" stroke-width="1.7"/></svg>
<div class="b" style="left:453px;top:285px;width:260.00px;height:35.00px;background:#5f80a6;border-radius:6px"></div>
<div class="t" style="left:465.75px;top:295.62px;font-size:17.5px;color:#fff;font-weight:400;letter-spacing:0px;transform:scaleX(1.0031);transform-origin:0 0;margin-left:-1.00px;">RequestID</div>
<div class="b" style="left:581px;top:292px;width:107.00px;height:22.00px;background:#8fa3bd;border-radius:5px"></div>
<div class="t" style="left:587px;top:296.90px;font-size:16px;color:#fff;font-weight:400;letter-spacing:0px;transform:scaleX(0.9839);transform-origin:0 0;margin-left:-0.98px;">Sum</div>
<svg style="left:664px;top:298px" width="15" height="9" viewBox="0 0 15 9" ><path d="M1 1L7.5 7.5L14 1" fill="none" stroke="#fff" stroke-width="1.6"/></svg>
<svg style="left:693px;top:296px" width="12" height="12" viewBox="0 0 12 12" ><path d="M1 1L11 11M11 1L1 11" fill="none" stroke="#fff" stroke-width="1.7"/></svg>
<div class="b" style="left:724px;top:206px;width:635.00px;height:148.00px;background:#fff"></div>
<div class="b" style="left:724px;top:206px;width:142.00px;height:31.00px;background:#f3f3f3;border:1px solid #ddd"></div>
<div class="b" style="left:866px;top:206px;width:68.00px;height:31.00px;background:#f3f3f3;border:1px solid #ddd;border-left:none"></div>
<div class="b" style="left:934px;top:206px;width:121.00px;height:31.00px;background:#fff;border-top:2px solid #e8652a"></div>
<div class="b" style="left:1055px;top:206px;width:134.00px;height:31.00px;background:#f3f3f3;border:1px solid #ddd"></div>
<div class="b" style="left:1189px;top:206px;width:170.00px;height:31.00px;background:#ededed"></div>
<div class="b" style="left:724px;top:236px;width:210.00px;height:1.00px;background:#ddd"></div>
<div class="b" style="left:1055px;top:236px;width:134.00px;height:1.00px;background:#ddd"></div>
<div class="t" style="left:731.2px;top:212.55px;font-size:17px;color:#444;font-weight:400;letter-spacing:0px;transform:scaleX(1.0214);transform-origin:0 0;margin-left:-1.02px;">Individual Values</div>
<div class="t" style="left:873px;top:212.55px;font-size:17px;color:#444;font-weight:400;letter-spacing:0px;transform:scaleX(0.9474);transform-origin:0 0;margin-left:-0.95px;">Ranges</div>
<div class="t" style="left:940px;top:214.62px;font-size:17.5px;color:#111;font-weight:400;letter-spacing:0px;transform:scaleX(1.0286);transform-origin:0 0;margin-left:0.00px;">Top/Bottom N</div>
<div class="t" style="left:1061.4px;top:212.12px;font-size:17.5px;color:#444;font-weight:400;letter-spacing:0px;transform:scaleX(1.0083);transform-origin:0 0;margin-left:0.00px;">Top/Bottom N%</div>
<div class="b" style="left:735px;top:253px;width:16.00px;height:16.00px;border:1px solid #4a8fd8;border-radius:2px;background:#dfeaf7"></div>
<svg style="left:737px;top:256px" width="12" height="10" viewBox="0 0 12 10" ><path d="M1 5L4.5 8.5L11 1.5" fill="none" stroke="#2f78c8" stroke-width="1.6"/></svg>
<div class="t" style="left:755px;top:249.88px;font-size:17.5px;color:#222;font-weight:400;letter-spacing:0px;transform:scaleX(0.9524);transform-origin:0 0;margin-left:0.00px;">Top 5</div>
<div class="b" style="left:735px;top:278px;width:16.00px;height:16.00px;border:1px solid #444;border-radius:2px;background:#fff"></div>
<div class="t" style="left:755px;top:274.88px;font-size:17.5px;color:#222;font-weight:400;letter-spacing:0px;transform:scaleX(0.9760);transform-origin:0 0;margin-left:0.00px;">Top 10</div>
<div class="b" style="left:735px;top:303px;width:16.00px;height:16.00px;border:1px solid #444;border-radius:2px;background:#fff"></div>
<div class="t" style="left:755px;top:299.88px;font-size:17.5px;color:#222;font-weight:400;letter-spacing:0px;transform:scaleX(1.0294);transform-origin:0 0;margin-left:-1.03px;">Bottom 5</div>
<div class="b" style="left:735px;top:328px;width:16.00px;height:16.00px;border:1px solid #444;border-radius:2px;background:#fff"></div>
<div class="t" style="left:755px;top:324.88px;font-size:17.5px;color:#222;font-weight:400;letter-spacing:0px;transform:scaleX(1.0353);transform-origin:0 0;margin-left:-1.04px;">Bottom 10</div>
<div class="t" style="left:805px;top:250.90px;font-size:16px;color:#4a8fd8;font-weight:400;letter-spacing:0px;transform:scaleX(1.0000);transform-origin:0 0;margin-left:-1.00px;">by None</div>
<div class="b" style="left:989px;top:246px;width:154.00px;height:22.00px;background:#1db394"></div>
<svg style="left:997px;top:251px" width="12" height="12" viewBox="0 0 12 12" ><path d="M6 1V11M1 6H11" stroke="#fff" stroke-width="2"/></svg>
<div class="t" style="left:1016px;top:248.55px;font-size:17px;color:#fff;font-weight:400;letter-spacing:0px;transform:scaleX(0.9837);transform-origin:0 0;margin-left:0.00px;">Add New Range</div>
<div class="t" style="left:1374.7px;top:214.12px;font-size:17.5px;color:#333;font-weight:400;letter-spacing:0px;transform:scaleX(0.9971);transform-origin:0 0;margin-left:-1.99px;">Include Items</div>
<svg style="left:1485px;top:219px" width="11" height="6" viewBox="0 0 11 6" ><path d="M0 0H11L5.5 6Z" fill="#555"/></svg>
<div class="t" style="left:1557.6px;top:218.12px;font-size:17.5px;color:#4a8fd8;font-weight:400;letter-spacing:0px;transform:scaleX(1.0222);transform-origin:0 0;margin-left:-1.02px;">Clear All</div>
<div class="b" style="left:1373px;top:238px;width:250.00px;height:116.00px;background:#fff"></div>
<svg style="left:1375px;top:247px" width="15" height="14" viewBox="0 0 15 14" ><path d="M1.5 1.5L13.5 12.5M13.5 1.5L1.5 12.5" fill="none" stroke="#e8652a" stroke-width="2.4"/></svg>
<div class="t" style="left:1395.7px;top:246.12px;font-size:17.5px;color:#222;font-weight:400;letter-spacing:0px;transform:scaleX(0.9643);transform-origin:0 0;margin-left:0.00px;">Top 5</div>
<div class="b" style="left:421px;top:373px;width:1350.00px;height:489.00px;background:#fff;border-left:1px solid #e0e0e0;border-top:1px solid #e6e6e6"></div>
<div class="b" style="left:422px;top:374px;width:36.00px;height:488.00px;background:#f8f8f8"></div>
<div class="b" style="left:458px;top:374px;width:1313.00px;height:32.00px;background:#f0f0f0"></div>
<div class="b" style="left:458px;top:406px;width:374.00px;height:456.00px;background:#f9f9f9"></div>
<div class="b" style="left:458px;top:405px;width:1313.00px;height:1.00px;background:#e0e0e0"></div>
<div class="b" style="left:457px;top:374px;width:1.00px;height:488.00px;border-left:1px dotted #d0d0d0"></div>
<div class="b" style="left:645px;top:374px;width:1.00px;height:488.00px;background:#e3e3e3"></div>
<div class="b" style="left:832px;top:374px;width:1.00px;height:488.00px;background:#e3e3e3"></div>
<div class="b" style="left:1020px;top:374px;width:1.00px;height:488.00px;background:#e3e3e3"></div>
<div class="b" style="left:1207px;top:374px;width:1.00px;height:488.00px;background:#e3e3e3"></div>
<div class="b" style="left:1395px;top:374px;width:1.00px;height:488.00px;background:#e3e3e3"></div>
<div class="b" style="left:1582px;top:374px;width:1.00px;height:488.00px;background:#e3e3e3"></div>
<div class="b" style="left:1771px;top:374px;width:1.00px;height:488.00px;background:#e3e3e3"></div>
<div class="t" style="left:505px;top:381.62px;font-size:17.5px;color:#959595;font-weight:700;letter-spacing:0px;transform:scaleX(0.9979);transform-origin:0 0;margin-left:-1.00px;">Department</div>
<div class="t" style="left:699.25px;top:381.62px;font-size:17.5px;color:#959595;font-weight:700;letter-spacing:0px;transform:scaleX(0.9270);transform-origin:0 0;margin-left:0.00px;">Technician</div>
<div class="t" style="left:898.5px;top:381.62px;font-size:17.5px;color:#959595;font-weight:700;letter-spacing:0px;transform:scaleX(0.9821);transform-origin:0 0;margin-left:-0.98px;">Closed</div>
<div class="t" style="left:1083.75px;top:381.62px;font-size:17.5px;color:#959595;font-weight:700;letter-spacing:0px;transform:scaleX(0.9659);transform-origin:0 0;margin-left:-0.97px;">On Hold</div>
<div class="t" style="left:1281.7px;top:381.62px;font-size:17.5px;color:#959595;font-weight:700;letter-spacing:0px;transform:scaleX(0.9860);transform-origin:0 0;margin-left:-0.99px;">Open</div>
<div class="t" style="left:1455px;top:381.62px;font-size:17.5px;color:#959595;font-weight:700;letter-spacing:0px;transform:scaleX(0.9316);transform-origin:0 0;margin-left:-0.93px;">Resolved</div>
<div class="t" style="left:1603.8px;top:381.62px;font-size:17.5px;color:#959595;font-weight:700;letter-spacing:0px;transform:scaleX(0.9573);transform-origin:0 0;margin-left:0.00px;">Total RequestID</div>
<svg style="left:1743px;top:379px" width="12" height="18" viewBox="0 0 12 18" ><path d="M5.8 17.5V2M1.5 6.3L5.8 2L10.1 6.3" fill="none" stroke="#8c8c8c" stroke-width="1.5"/></svg>
<div class="t" style="left:421px;width:37px;text-align:center;top:412.70px;font-size:18px;color:#a4a4a4">1</div>
<div class="t" style="left:467.9px;top:412.70px;font-size:18px;color:#a4a4a4;font-weight:400;letter-spacing:0px;transform:scaleX(0.9681);transform-origin:0 0;margin-left:-0.97px;">Engineering</div>
<div class="t" style="left:655px;top:412.70px;font-size:18px;color:#a4a4a4;font-weight:400;letter-spacing:0px;transform:scaleX(0.96);transform-origin:0 0;margin-left:-1.00px;">Bruce Waters</div>
<div class="t" style="left:811px;width:200px;text-align:right;top:412.70px;font-size:18px;color:#a4a4a4">5840</div>
<div class="t" style="left:1186px;width:200px;text-align:right;top:412.70px;font-size:18px;color:#a4a4a4">2514</div>
<div class="t" style="left:1373px;width:200px;text-align:right;top:412.70px;font-size:18px;color:#a4a4a4">23508</div>
<div class="t" style="left:1562px;width:200px;text-align:right;top:412.70px;font-size:18px;color:#a4a4a4">31862</div>
<div class="t" style="left:421px;width:37px;text-align:center;top:445.15px;font-size:18px;color:#a4a4a4">2</div>
<div class="t" style="left:655px;top:445.15px;font-size:18px;color:#a4a4a4;font-weight:400;letter-spacing:0px;transform:scaleX(0.96);transform-origin:0 0;margin-left:-1.00px;">Ed Holmes</div>
<div class="t" style="left:811px;width:200px;text-align:right;top:445.15px;font-size:18px;color:#a4a4a4">7450</div>
<div class="t" style="left:998px;width:200px;text-align:right;top:445.15px;font-size:18px;color:#a4a4a4">178</div>
<div class="t" style="left:1373px;width:200px;text-align:right;top:445.15px;font-size:18px;color:#a4a4a4">19589</div>
<div class="t" style="left:1562px;width:200px;text-align:right;top:445.15px;font-size:18px;color:#a4a4a4">27217</div>
<div class="t" style="left:421px;width:37px;text-align:center;top:477.60px;font-size:18px;color:#a4a4a4">3</div>
<div class="t" style="left:655px;top:477.60px;font-size:18px;color:#a4a4a4;font-weight:400;letter-spacing:0px;transform:scaleX(0.96);transform-origin:0 0;margin-left:-1.00px;">Howard Stern</div>
<div class="t" style="left:811px;width:200px;text-align:right;top:477.60px;font-size:18px;color:#a4a4a4">7920</div>
<div class="t" style="left:1186px;width:200px;text-align:right;top:477.60px;font-size:18px;color:#a4a4a4">773</div>
<div class="t" style="left:1373px;width:200px;text-align:right;top:477.60px;font-size:18px;color:#a4a4a4">18134</div>
<div class="t" style="left:1562px;width:200px;text-align:right;top:477.60px;font-size:18px;color:#a4a4a4">26827</div>
<div class="t" style="left:421px;width:37px;text-align:center;top:510.05px;font-size:18px;color:#a4a4a4">4</div>
<div class="t" style="left:655px;top:510.05px;font-size:18px;color:#a4a4a4;font-weight:400;letter-spacing:0px;transform:scaleX(0.96);transform-origin:0 0;margin-left:-1.00px;">Brad Gessup</div>
<div class="t" style="left:811px;width:200px;text-align:right;top:510.05px;font-size:18px;color:#a4a4a4">8025</div>
<div class="t" style="left:1186px;width:200px;text-align:right;top:510.05px;font-size:18px;color:#a4a4a4">807</div>
<div class="t" style="left:1373px;width:200px;text-align:right;top:510.05px;font-size:18px;color:#a4a4a4">17135</div>
<div class="t" style="left:1562px;width:200px;text-align:right;top:510.05px;font-size:18px;color:#a4a4a4">25967</div>
<div class="t" style="left:421px;width:37px;text-align:center;top:542.50px;font-size:18px;color:#a4a4a4">5</div>
<div class="t" style="left:655px;top:542.50px;font-size:18px;color:#a4a4a4;font-weight:400;letter-spacing:0px;transform:scaleX(0.96);transform-origin:0 0;margin-left:-1.00px;">Frederica Watson</div>
<div class="t" style="left:811px;width:200px;text-align:right;top:542.50px;font-size:18px;color:#a4a4a4">7068</div>
<div class="t" style="left:1186px;width:200px;text-align:right;top:542.50px;font-size:18px;color:#a4a4a4">518</div>
<div class="t" style="left:1373px;width:200px;text-align:right;top:542.50px;font-size:18px;color:#a4a4a4">18068</div>
<div class="t" style="left:1562px;width:200px;text-align:right;top:542.50px;font-size:18px;color:#a4a4a4">25654</div>
<div class="t" style="left:421px;width:37px;text-align:center;top:574.95px;font-size:18px;color:#a4a4a4">6</div>
<div class="t" style="left:655px;top:574.95px;font-size:18px;color:#a4a4a4;font-weight:400;letter-spacing:0px;transform:scaleX(0.96);transform-origin:0 0;margin-left:-1.00px;">Robert Whitman</div>
<div class="t" style="left:811px;width:200px;text-align:right;top:574.95px;font-size:18px;color:#a4a4a4">4378</div>
<div class="t" style="left:998px;width:200px;text-align:right;top:574.95px;font-size:18px;color:#a4a4a4">860</div>
<div class="t" style="left:1186px;width:200px;text-align:right;top:574.95px;font-size:18px;color:#a4a4a4">323</div>
<div class="t" style="left:1373px;width:200px;text-align:right;top:574.95px;font-size:18px;color:#a4a4a4">19408</div>
<div class="t" style="left:1562px;width:200px;text-align:right;top:574.95px;font-size:18px;color:#a4a4a4">24969</div>
<div class="t" style="left:421px;width:37px;text-align:center;top:607.40px;font-size:18px;color:#a4a4a4">7</div>
<div class="t" style="left:655px;top:607.40px;font-size:18px;color:#a4a4a4;font-weight:400;letter-spacing:0px;transform:scaleX(0.96);transform-origin:0 0;margin-left:-1.00px;">Steve Wilson</div>
<div class="t" style="left:811px;width:200px;text-align:right;top:607.40px;font-size:18px;color:#a4a4a4">5125</div>
<div class="t" style="left:1373px;width:200px;text-align:right;top:607.40px;font-size:18px;color:#a4a4a4">19689</div>
<div class="t" style="left:1562px;width:200px;text-align:right;top:607.40px;font-size:18px;color:#a4a4a4">24814</div>
<div class="t" style="left:421px;width:37px;text-align:center;top:639.85px;font-size:18px;color:#a4a4a4">8</div>
<div class="t" style="left:655px;top:639.85px;font-size:18px;color:#a4a4a4;font-weight:400;letter-spacing:0px;transform:scaleX(0.96);transform-origin:0 0;margin-left:-1.00px;">Lynn Hendricks</div>
<div class="t" style="left:811px;width:200px;text-align:right;top:639.85px;font-size:18px;color:#a4a4a4">9571</div>
<div class="t" style="left:1373px;width:200px;text-align:right;top:639.85px;font-size:18px;color:#a4a4a4">13632</div>
<div class="t" style="left:1562px;width:200px;text-align:right;top:639.85px;font-size:18px;color:#a4a4a4">23203</div>
<div class="t" style="left:421px;width:37px;text-align:center;top:672.30px;font-size:18px;color:#a4a4a4">9</div>
<div class="t" style="left:655px;top:672.30px;font-size:18px;color:#a4a4a4;font-weight:400;letter-spacing:0px;transform:scaleX(0.96);transform-origin:0 0;margin-left:0.00px;">John Roberts</div>
<div class="t" style="left:811px;width:200px;text-align:right;top:672.30px;font-size:18px;color:#a4a4a4">5708</div>
<div class="t" style="left:1186px;width:200px;text-align:right;top:672.30px;font-size:18px;color:#a4a4a4">1425</div>
<div class="t" style="left:1373px;width:200px;text-align:right;top:672.30px;font-size:18px;color:#a4a4a4">15302</div>
<div class="t" style="left:1562px;width:200px;text-align:right;top:672.30px;font-size:18px;color:#a4a4a4">22435</div>
<div class="t" style="left:421px;width:37px;text-align:center;top:704.75px;font-size:18px;color:#a4a4a4">10</div>
<div class="t" style="left:655px;top:704.75px;font-size:18px;color:#a4a4a4;font-weight:400;letter-spacing:0px;transform:scaleX(0.96);transform-origin:0 0;margin-left:-1.00px;">Roger Wright</div>
<div class="t" style="left:811px;width:200px;text-align:right;top:704.75px;font-size:18px;color:#a4a4a4">6120</div>
<div class="t" style="left:1186px;width:200px;text-align:right;top:704.75px;font-size:18px;color:#a4a4a4">1542</div>
<div class="t" style="left:1373px;width:200px;text-align:right;top:704.75px;font-size:18px;color:#a4a4a4">14683</div>
<div class="t" style="left:1562px;width:200px;text-align:right;top:704.75px;font-size:18px;color:#a4a4a4">22345</div>
<div class="t" style="left:421px;width:37px;text-align:center;top:737.20px;font-size:18px;color:#a4a4a4">11</div>
<div class="t" style="left:655px;top:737.20px;font-size:18px;color:#a4a4a4;font-weight:400;letter-spacing:0px;transform:scaleX(0.96);transform-origin:0 0;margin-left:-1.00px;">Heather</div>
<div class="t" style="left:811px;width:200px;text-align:right;top:737.20px;font-size:18px;color:#a4a4a4">4914</div>
<div class="t" style="left:1186px;width:200px;text-align:right;top:737.20px;font-size:18px;color:#a4a4a4">65</div>
<div class="t" style="left:1373px;width:200px;text-align:right;top:737.20px;font-size:18px;color:#a4a4a4">15279</div>
<div class="t" style="left:1562px;width:200px;text-align:right;top:737.20px;font-size:18px;color:#a4a4a4">20258</div>
<div class="t" style="left:421px;width:37px;text-align:center;top:769.65px;font-size:18px;color:#a4a4a4">12</div>
<div class="t" style="left:655px;top:769.65px;font-size:18px;color:#a4a4a4;font-weight:400;letter-spacing:0px;transform:scaleX(0.96);transform-origin:0 0;margin-left:0.00px;">Joe Williams</div>
<div class="t" style="left:811px;width:200px;text-align:right;top:769.65px;font-size:18px;color:#a4a4a4">5144</div>
<div class="t" style="left:998px;width:200px;text-align:right;top:769.65px;font-size:18px;color:#a4a4a4">651</div>
<div class="t" style="left:1373px;width:200px;text-align:right;top:769.65px;font-size:18px;color:#a4a4a4">14306</div>
<div class="t" style="left:1562px;width:200px;text-align:right;top:769.65px;font-size:18px;color:#a4a4a4">20101</div>
<div class="t" style="left:421px;width:37px;text-align:center;top:802.10px;font-size:18px;color:#a4a4a4">13</div>
<div class="t" style="left:655px;top:802.10px;font-size:18px;color:#a4a4a4;font-weight:400;letter-spacing:0px;transform:scaleX(0.96);transform-origin:0 0;margin-left:-1.00px;">Robert Woodman</div>
<div class="t" style="left:811px;width:200px;text-align:right;top:802.10px;font-size:18px;color:#a4a4a4">6193</div>
<div class="t" style="left:1373px;width:200px;text-align:right;top:802.10px;font-size:18px;color:#a4a4a4">7792</div>
<div class="t" style="left:1562px;width:200px;text-align:right;top:802.10px;font-size:18px;color:#a4a4a4">13985</div>
<div class="t" style="left:421px;width:37px;text-align:center;top:834.55px;font-size:18px;color:#a4a4a4">14</div>
<div class="t" style="left:655px;top:834.55px;font-size:18px;color:#a4a4a4;font-weight:400;letter-spacing:0px;transform:scaleX(0.96);transform-origin:0 0;margin-left:-1.00px;">Shawn Adams</div>
<div class="t" style="left:811px;width:200px;text-align:right;top:834.55px;font-size:18px;color:#a4a4a4">5672</div>
<div class="t" style="left:1186px;width:200px;text-align:right;top:834.55px;font-size:18px;color:#a4a4a4">424</div>
<div class="t" style="left:1373px;width:200px;text-align:right;top:834.55px;font-size:18px;color:#a4a4a4">7755</div>
<div class="t" style="left:1562px;width:200px;text-align:right;top:834.55px;font-size:18px;color:#a4a4a4">13851</div>
<div class="b" style="left:1771px;top:406px;width:21.00px;height:456.00px;background:#f8f8f8"></div>
<svg style="left:1777px;top:415px" width="10" height="6" viewBox="0 0 10 6" ><path d="M0 6L5 0L10 6Z" fill="#c8c8c8"/></svg>
<div class="b" style="left:1773px;top:427px;width:17.00px;height:163.00px;background:#d8d8d8"></div>
<svg style="left:1777px;top:846px" width="10" height="6" viewBox="0 0 10 6" ><path d="M0 0L5 6L10 0Z" fill="#999"/></svg>
<div class="b" style="left:1759px;top:831px;width:9.00px;height:27.00px;background:#b5b5b5"></div>
<div class="b" style="left:822px;top:362px;width:287.00px;height:29.00px;background:#f3f3f3;border-radius:0 0 22px 22px;box-shadow:0 3px 4px rgba(0,0,0,0.15)"></div>
<div class="b" style="left:834px;top:359px;width:263.00px;height:25.00px;background:#26bfa7;border-radius:13px"></div>
<div class="t" style="left:854.8px;top:363.62px;font-size:17.5px;color:#fff;font-weight:400;letter-spacing:0px;transform:scaleX(0.9910);transform-origin:0 0;margin-left:-0.99px;">Click Here to Generate Pivot</div>
<div class="b" style="left:1822.4px;top:793.6px;width:99.60px;height:68.40px;background:#efefef;border-radius:7px 7px 0 0"></div>
<div class="b" style="left:1826.3px;top:797px;width:29.10px;height:60.80px;background:#e2e2e2;border-radius:4px"></div>
<svg style="left:1826px;top:810px" width="30" height="26" viewBox="0 0 30 26" ><path d="M12.9 3.6L3.2 12.8L12.9 22.5M21.7 3.6L11.9 12.8L21.7 22.5" fill="none" stroke="#111" stroke-width="2.6" stroke-linecap="round" stroke-linejoin="round"/></svg>
<svg style="left:1859.5px;top:795.75px" width="60" height="60" viewBox="0 0 60 60" ><defs>
<clipPath id="cb"><rect x="0" y="0" width="27.1" height="60"/><rect x="0" y="24.6" width="32" height="9.2"/></clipPath>
<clipPath id="cr"><rect x="32.9" y="0" width="30" height="27.05"/></clipPath>
<clipPath id="cy"><rect x="32.9" y="32" width="30" height="30"/></clipPath></defs>
<circle cx="30" cy="30" r="21.75" fill="none" stroke="#1a80d4" stroke-width="9" clip-path="url(#cb)"/>
<path d="M6 24.6H30.8A4.6 4.6 0 0 1 30.8 33.8H6Z" fill="#1a80d4"/>
<circle cx="30" cy="30" r="21.75" fill="none" stroke="#940606" stroke-width="9" clip-path="url(#cr)"/>
<circle cx="30" cy="30" r="21.75" fill="none" stroke="#fbc10f" stroke-width="9" clip-path="url(#cy)"/></svg></body></html>
